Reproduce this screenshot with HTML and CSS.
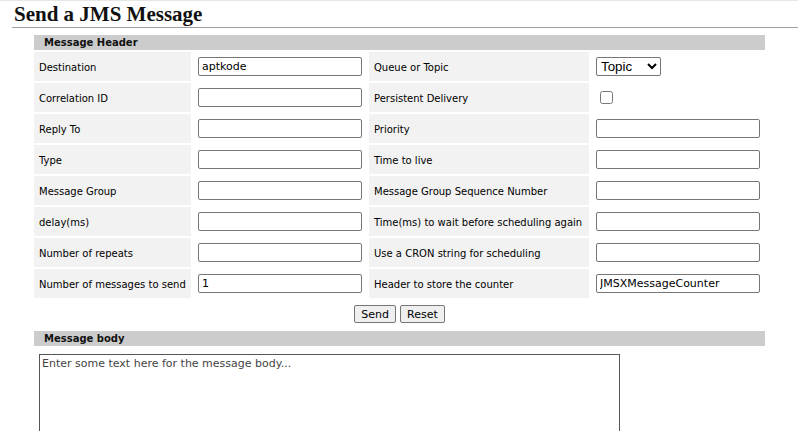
FILE: index.html
```html
<!DOCTYPE html>
<html>
<head>
<meta charset="utf-8">
<title>Send a JMS Message</title>
<link rel="stylesheet" href="styles.css">
</head>
<body>
<h1 class="title">Send a JMS Message</h1>
<form class="form">
  <div class="bar">Message Header</div>
  <div class="grid">
    <div class="label">Destination</div>
    <div class="field"><input class="text" type="text" value="aptkode"></div>
    <div class="label">Queue or Topic</div>
    <div class="field"><select class="select"><option>Queue</option><option selected>Topic</option></select></div>

    <div class="label">Correlation ID</div>
    <div class="field"><input class="text" type="text"></div>
    <div class="label">Persistent Delivery</div>
    <div class="field"><input class="check" type="checkbox"></div>

    <div class="label">Reply To</div>
    <div class="field"><input class="text" type="text"></div>
    <div class="label">Priority</div>
    <div class="field"><input class="text" type="text"></div>

    <div class="label">Type</div>
    <div class="field"><input class="text" type="text"></div>
    <div class="label">Time to live</div>
    <div class="field"><input class="text" type="text"></div>

    <div class="label">Message Group</div>
    <div class="field"><input class="text" type="text"></div>
    <div class="label">Message Group Sequence Number</div>
    <div class="field"><input class="text" type="text"></div>

    <div class="label">delay(ms)</div>
    <div class="field"><input class="text" type="text"></div>
    <div class="label">Time(ms) to wait before scheduling again</div>
    <div class="field"><input class="text" type="text"></div>

    <div class="label">Number of repeats</div>
    <div class="field"><input class="text" type="text"></div>
    <div class="label">Use a CRON string for scheduling</div>
    <div class="field"><input class="text" type="text"></div>

    <div class="label">Number of messages to send</div>
    <div class="field"><input class="text" type="text" value="1"></div>
    <div class="label">Header to store the counter</div>
    <div class="field"><input class="text" type="text" value="JMSXMessageCounter"></div>
  </div>
  <div class="actions">
    <button class="btn" type="button">Send</button>
    <button class="btn" type="reset">Reset</button>
  </div>
  <div class="bar">Message body</div>
  <div class="body-cell">
    <textarea class="body-text" placeholder="Enter some text here for the message body..."></textarea>
  </div>
</form>
</body>
</html>
```

FILE: styles.css
```css
html, body {
  margin: 0;
  padding: 0;
  background: #fff;
}
body {
  border-top: 1px solid #e6e6e6;
  font-family: "DejaVu Sans", Verdana, sans-serif;
  font-size: 10px;
  color: #000;
  overflow: hidden;
}
.title {
  margin: 0 0 0 12px;
  padding-left: 2px;
  height: 26px;
  line-height: 27px;
  font-family: "Liberation Serif", "Times New Roman", serif;
  font-weight: bold;
  font-size: 21px;
  color: #111;
  border-bottom: 1px solid #a0a0a0;
}
.form {
  margin: 7px 0 0 34px;
  width: 731px;
}
.bar {
  height: 15px;
  line-height: 15px;
  background: #cccccc;
  padding-left: 10px;
  font-weight: bold;
  font-size: 10px;
  color: #111;
}
.grid {
  display: grid;
  grid-template-columns: 157px 174px 220px 174px;
  grid-auto-rows: 29px;
  gap: 2px;
  margin-top: 2px;
}
.label {
  background: #f2f2f2;
  padding: 1px 0 0 5px;
  display: flex;
  align-items: center;
  white-space: nowrap;
}
.field {
  padding: 0 5px;
  display: flex;
  align-items: center;
}
.text {
  box-sizing: border-box;
  width: 164px;
  height: 19px;
  margin: 0;
  padding: 0 3px;
  border: 1px solid #767676;
  border-radius: 2px;
  font-family: "DejaVu Sans", Verdana, sans-serif;
  font-size: 11px;
  color: #000;
  background: #fff;
}
.select {
  box-sizing: border-box;
  width: 65px;
  height: 19px;
  margin: 0;
  border: 1px solid #767676;
  border-radius: 2px;
  font-family: "Liberation Sans", Arial, sans-serif;
  font-size: 13.33px;
  background: #fff;
  color: #000;
}
.check {
  width: 13px;
  height: 13px;
  margin: 3px 3px 3px 4px;
}
.actions {
  display: flex;
  justify-content: center;
  gap: 4px;
  padding: 7px 0 8px;
}
.btn {
  box-sizing: border-box;
  height: 18px;
  margin: 0;
  padding: 0 6px;
  border: 1px solid #767676;
  border-radius: 2px;
  background: #efefef;
  font-family: "DejaVu Sans", Verdana, sans-serif;
  font-size: 11px;
  color: #000;
}
.body-cell {
  padding: 8px 0 0 5px;
}
.body-text {
  display: block;
  box-sizing: border-box;
  width: 581px;
  height: 100px;
  margin: 0;
  padding: 2px 2px;
  border: 1px solid #555;
  border-radius: 0;
  font-family: "DejaVu Sans", Verdana, sans-serif;
  font-size: 11px;
  resize: none;
}
.body-text::placeholder {
  color: #444;
}
```
